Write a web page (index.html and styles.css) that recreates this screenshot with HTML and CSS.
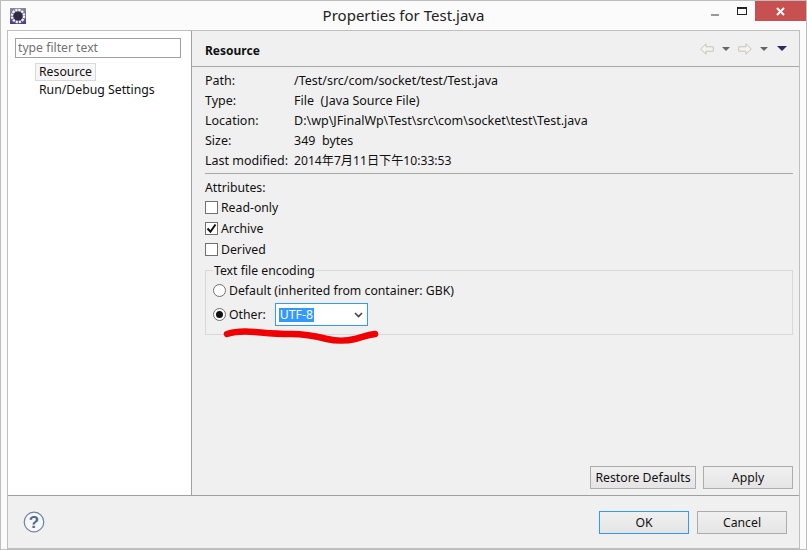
FILE: index.html
```html
<!DOCTYPE html>
<html lang="en">
<head>
<meta charset="utf-8">
<title>Properties for Test.java</title>
<link rel="stylesheet" href="styles.css">
</head>
<body>
<div class="window">
  <header class="titlebar">
    <svg class="app-icon" width="16" height="16" viewBox="0 0 16 16"><defs><linearGradient id="ig" x1="0" y1="0" x2="0" y2="1"><stop offset="0" stop-color="#8d8a9a"/><stop offset="1" stop-color="#4f3b86"/></linearGradient></defs><rect width="16" height="16" fill="url(#ig)"/><circle cx="8" cy="8" r="6" fill="none" stroke="#f2f1f4" stroke-width="2.6" stroke-dasharray="2.2 .9"/><circle cx="8" cy="8" r="4.6" fill="#2f2a44"/></svg>
    <div class="title">Properties for Test.java</div>
    <div class="win-controls">
      <span class="ctl-min"></span>
      <span class="ctl-max"></span>
      <span class="ctl-close"><svg width="9" height="9" viewBox="0 0 9 9"><path d="M1 1l7 7M8 1L1 8" stroke="#fff" stroke-width="2"/></svg></span>
    </div>
  </header>
  <div class="client">
    <div class="main">
      <aside class="sidebar">
        <div class="filter">type filter text</div>
        <ul class="tree">
          <li><span class="tree-sel">Resource</span></li>
          <li><span class="tree-item">Run/Debug Settings</span></li>
        </ul>
      </aside>
      <section class="pane">
        <div class="pane-head">
          <h1>Resource</h1>
          <div class="nav">
            <svg width="14" height="12" viewBox="0 0 14 12"><path d="M.7 6L6 .8v3h7.3v4.4H6v3z" fill="#f4f3ec" stroke="#c4c4bc"/></svg>
            <i class="tri"></i>
            <svg class="nav-fwd" width="14" height="12" viewBox="0 0 14 12"><path d="M13.3 6L8 .8v3H.7v4.4H8v3z" fill="#f4f3ec" stroke="#c4c4bc"/></svg>
            <i class="tri"></i>
            <i class="tri tri-dark"></i>
          </div>
        </div>
        <div class="pane-body">
          <dl class="info">
            <dt>Path:</dt><dd>/Test/src/com/socket/test/Test.java</dd>
            <dt>Type:</dt><dd>File &nbsp;(Java Source File)</dd>
            <dt>Location:</dt><dd>D:\wp\JFinalWp\Test\src\com\socket\test\Test.java</dd>
            <dt>Size:</dt><dd>349 &nbsp;bytes</dd>
            <dt>Last modified:</dt><dd class="date">2014年7月11日下午10:33:53</dd>
          </dl>
          <div class="rule"></div>
          <div class="attr-label">Attributes:</div>
          <div class="check"><span class="box"></span>Read-only</div>
          <div class="check"><span class="box"><svg width="11" height="11" viewBox="0 0 11 11"><path d="M1.5 5.5l3 3.2L9.5 1.5" fill="none" stroke="#111" stroke-width="2"/></svg></span>Archive</div>
          <div class="check"><span class="box"></span>Derived</div>
          <fieldset class="encoding">
            <legend>Text file encoding</legend>
            <div class="radio-row"><span class="radio"></span>Default (inherited from container: GBK)</div>
            <div class="radio-row radio-other">
              <span class="radio on"></span><span>Other:</span>
              <div class="combo"><span class="combo-text">UTF-8</span><svg width="9" height="6" viewBox="0 0 9 6"><path d="M1 1l3.5 3.5L8 1" fill="none" stroke="#444" stroke-width="1.6"/></svg></div>
            </div>
            <svg class="scribble" width="160" height="20" viewBox="0 0 160 20"><path d="M4 7C10 5 22 4 32 5c12 1 20 2 36 2 14 0 24 2 36 5 8 2 20 2 28 0 8-2 12-4 20-5" fill="none" stroke="#f00000" stroke-width="6.5" stroke-linecap="round"/></svg>
          </fieldset>
          <div class="pane-actions">
            <button class="btn btn-restore">Restore Defaults</button>
            <button class="btn">Apply</button>
          </div>
        </div>
      </section>
    </div>
    <footer class="footer">
      <svg class="help" width="22" height="22" viewBox="0 0 22 22"><circle cx="11" cy="11" r="9.8" fill="#f6f8fb" stroke="#6d83a3" stroke-width="1.2"/><text x="11" y="16.5" text-anchor="middle" class="help-q">?</text></svg>
      <div class="footer-btns">
        <button class="btn btn-default">OK</button>
        <button class="btn">Cancel</button>
      </div>
    </footer>
  </div>
</div>
</body>
</html>
```
FILE: styles.css
```css
* { box-sizing: border-box; }
html, body { margin: 0; padding: 0; }
body {
  width: 807px;
  height: 550px;
  overflow: hidden;
  font-family: "Noto Sans", "Noto Sans CJK SC", sans-serif;
  font-size: 12.25px;
  color: #111;
  background: #fff;
}
.window {
  width: 807px;
  height: 550px;
  display: flex;
  flex-direction: column;
  background: #fbfbfb;
  border: 1px solid #bdbdbd;
  padding: 0 6px 0 6px;
}
.titlebar {
  height: 29px;
  flex: none;
  display: flex;
  align-items: center;
  margin: 0 -6px 0 0;
  position: relative;
}
.app-icon { margin: 0 0 0 3px; flex: none; }
.title {
  position: absolute;
  left: 0; right: 0; top: 4px;
  text-align: center;
  font-size: 15px;
  line-height: 20px;
  padding-right: 6px;
  color: #222;
}
.win-controls {
  margin-left: auto;
  display: flex;
  align-items: flex-start;
  align-self: flex-start;
  position: relative;
}
.ctl-min { width: 8px; height: 2px; background: #999; margin: 13px 18px 0 0; }
.ctl-max { width: 10px; height: 8px; border: 1px solid #222; border-top-width: 2px; margin: 6px 8px 0 0; }
.ctl-close {
  width: 51px; height: 20px; background: #c75050;
  display: flex; align-items: center; justify-content: center;
}
.client {
  flex: 1;
  display: flex;
  flex-direction: column;
  border: 1px solid #bfbfbf;
  background: #f0f0f0;
  min-height: 0;
}
.main { flex: 1; display: flex; min-height: 0; border-bottom: 1px solid #a0a0a0; }
.sidebar { width: 184px; flex: none; background: #fff; border-right: 1px solid #a0a0a0; padding: 7px 0 0 7px; }
.filter {
  width: 166px; height: 20px; border: 1px solid #a0a0a0;
  color: #727272; line-height: 18px; padding-left: 2px; font-size: 12.2px;
}
.tree { list-style: none; margin: 5px 0 0; padding: 0 0 0 20px; }
.tree li { height: 18px; line-height: 18px; }
.tree-sel { display: inline-block; height: 18px; line-height: 16px; padding: 0 3px; background: #f6f6f6; border: 1px solid #d9d9d9; vertical-align: top; }
.tree-item { padding-left: 4px; }
.pane { flex: 1; display: flex; flex-direction: column; min-width: 0; }
.pane-head {
  height: 36px;
  flex: none;
  display: flex;
  align-items: center;
  justify-content: space-between;
  padding: 0 12px 0 13px;
  border-bottom: 1px solid #a8a8a8;
}
.pane-head h1 { margin: 3px 0 0; font-size: 12px; font-weight: 700; color: #111; }
.nav { display: flex; align-items: center; }
.nav svg { margin-right: 8px; }
.nav .nav-fwd { margin-left: 8px; }
.tri { width: 0; height: 0; border: 4px solid transparent; border-top: 4px solid #666; border-bottom: 0; margin-right: 0; }
.tri-dark { border-top-color: #2d2a5c; border-left-width: 5px; border-right-width: 5px; border-top-width: 5px; margin-left: 9px; }
.pane-body { flex: 1; display: flex; flex-direction: column; padding: 4px 6px 6px 13px; min-height: 0; }
.info {
  display: grid;
  grid-template-columns: 89px 1fr;
  grid-auto-rows: 20px;
  margin: 0;
  line-height: 20px;
  font-size: 12.5px;
}
.info dt, .info dd { margin: 0; }
.info .date { font-size: 12.15px; }
.rule { height: 1px; background: #a8a8a8; margin: 2px 0 4px; }
.attr-label { height: 19px; line-height: 20px; }
.check { height: 21px; display: flex; align-items: center; }
.box {
  width: 13px; height: 13px; border: 1px solid #707070; background: #fff;
  margin-right: 3px; display: flex; align-items: center; justify-content: center; flex: none;
}
.encoding {
  margin: 2px 0 0;
  padding: 0 0 0 7px;
  height: 73px;
  border: 1px solid #d8d8d8;
  border-radius: 0;
  position: relative;
}
.encoding legend { padding: 0 1px; line-height: 17px; margin-left: 0; }
.radio-row { display: flex; align-items: center; height: 22px; }
.radio-other { height: 23px; margin-top: 2px; }
.radio {
  width: 13px; height: 13px; border-radius: 50%; border: 1px solid #707070; background: #fff;
  margin-right: 3px; flex: none; display: flex; align-items: center; justify-content: center;
}
.radio.on::after { content: ""; width: 7px; height: 7px; border-radius: 50%; background: #111; }
.combo {
  width: 93px; height: 23px; margin-left: 9px; border: 1px solid #3399ff; background: #fff;
  display: flex; align-items: center; justify-content: space-between; padding: 0 4px 0 3px;
}
.combo-text { background: #3399ff; color: #fff; line-height: 14px; padding: 0 0 0 1px; width: 35px; }
.scribble { position: absolute; left: 17px; top: 48px; }
.pane-actions { margin-top: auto; display: flex; justify-content: flex-end; gap: 7px; }
.btn {
  width: 90px; height: 23px; border: 1px solid #acacac; background: linear-gradient(#f0f0f0, #e5e5e5);
  font: inherit; color: #111; padding: 0;
}
.btn-restore { width: 106px; }
.footer { height: 52px; flex: none; display: flex; align-items: center; justify-content: space-between; padding: 0 12px 0 15px; }
.help-q { font-family: "Liberation Sans", sans-serif; font-size: 17px; font-weight: 700; fill: #54698c; }
.footer-btns { display: flex; gap: 8px; }
.btn-default { border-color: #3399ff; }
```
